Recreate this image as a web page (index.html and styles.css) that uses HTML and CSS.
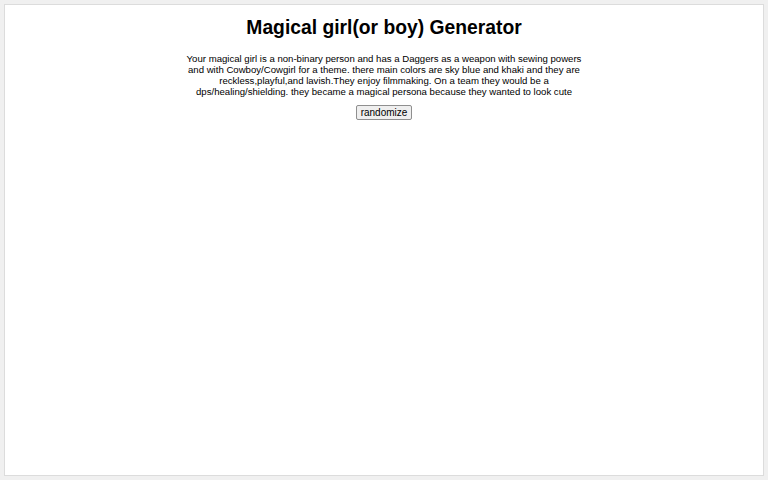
FILE: index.html
```html
<!DOCTYPE html>
<html lang="en">
<head>
<meta charset="utf-8">
<title>Magical girl(or boy) Generator</title>
<link rel="stylesheet" href="styles.css">
</head>
<body>
<main class="frame">
  <h1 class="title">Magical girl(or boy) Generator</h1>
  <p class="result">Your magical girl is a non-binary person and has a Daggers as a weapon with sewing powers and with Cowboy/Cowgirl for a theme. there main colors are sky blue and khaki and they are reckless,playful,and lavish.They enjoy filmmaking. On a team they would be a dps/healing/shielding. they became a magical persona because they wanted to look cute</p>
  <div class="actions">
    <button class="randomize" type="button">randomize</button>
  </div>
</main>
</body>
</html>
```

FILE: styles.css
```css
html, body {
  margin: 0;
  height: 100%;
}

body {
  background: #f0f0f0;
  padding: 4px;
  box-sizing: border-box;
  font-family: "Liberation Sans", Arial, sans-serif;
  color: #000;
}

.frame {
  height: 100%;
  box-sizing: border-box;
  background: #fff;
  border: 1px solid #dcdcdc;
  padding-top: 12px;
  text-align: center;
}

.title {
  margin: 0;
  font-size: 19.3px;
  font-weight: bold;
  line-height: 22px;
}

.result {
  width: 400px;
  margin: 14px auto 0;
  font-size: 9.6px;
  line-height: 11px;
}

.actions {
  margin-top: 8px;
  display: flex;
  justify-content: center;
}

.randomize {
  font-family: "Liberation Sans", Arial, sans-serif;
  font-size: 10px;
  line-height: 11px;
  padding: 1px 4px;
  background: #efefef;
  border: 1px solid #8f8f8f;
  border-radius: 2px;
  color: #000;
}
```
